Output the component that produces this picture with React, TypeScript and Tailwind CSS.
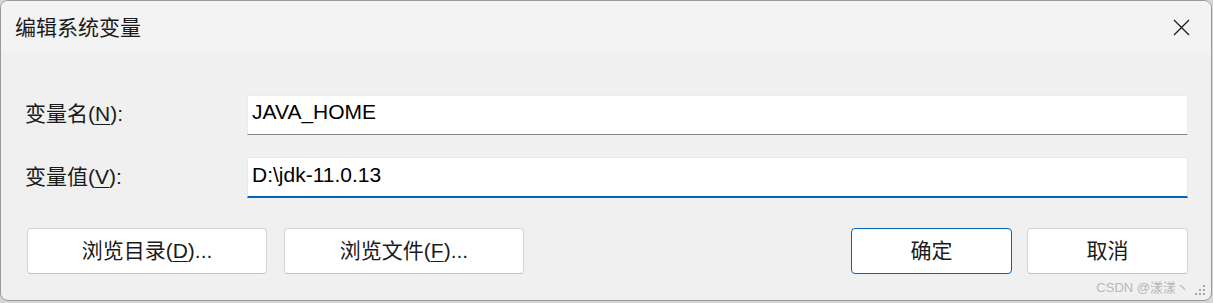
import React from "react";

const FONT = { fontFamily: '"Liberation Sans", "Noto Sans CJK SC", sans-serif' };

function Mnemonic({ label, k, tail = "" }: { label: string; k: string; tail?: string }) {
  return (
    <>
      {label}(<span className="underline underline-offset-[3px] decoration-1">{k}</span>){tail}
    </>
  );
}

function DialogButton({
  children,
  primary,
  narrow,
  className = "",
}: {
  children: React.ReactNode;
  primary?: boolean;
  narrow?: boolean;
  className?: string;
}) {
  return (
    <button
      type="button"
      className={
        "h-[46px] flex items-center justify-center rounded-[4px] bg-white text-[21px] text-[#1b1b1b] " +
        (narrow ? "w-[161px] " : "w-[240px] ") +
        (primary ? "border border-[#0067c0] " : "border border-[#d4d4d4] border-b-[#c2c2c2] ") +
        className
      }
    >
      {children}
    </button>
  );
}

export default function App() {
  return (
    <div className="w-[1213px] h-[303px] bg-[#d6d6d6]" style={FONT}>
      <div className="relative w-[1212px] h-[301px] rounded-[8px] border border-[#9a9a9a] bg-[#f0f0f0] overflow-hidden flex flex-col">
        {/* title bar */}
        <div className="h-[52px] shrink-0 bg-[#f3f3f4] flex items-center justify-between pl-[14px] pr-[21px]">
          <span className="text-[21px] text-[#1b1b1b] leading-none">编辑系统变量</span>
          <svg width="17" height="17" viewBox="0 0 17 17" className="text-[#1b1b1b]">
            <path d="M1 1 L16 16 M16 1 L1 16" stroke="currentColor" strokeWidth="1.3" fill="none" />
          </svg>
        </div>

        {/* body */}
        <div className="flex-1 pl-[24px] pr-[23px] pt-[42px]">
          <div className="flex items-center">
            <div className="w-[222px] text-[21px] text-[#1b1b1b] pb-[2px]">
              <Mnemonic label="变量名" k="N" tail=":" />
            </div>
            <div className="flex-1 h-[40px] bg-white border border-[#ececec] border-b-[#868686] pl-[4px] text-[21px] text-black leading-[32px]">
              JAVA_HOME
            </div>
          </div>

          <div className="flex items-center mt-[22px]">
            <div className="w-[222px] text-[21px] text-[#1b1b1b] pb-[2px]">
              <Mnemonic label="变量值" k="V" tail=":" />
            </div>
            <div className="flex-1 h-[41px] bg-white border border-[#e6e9ee] border-b-2 border-b-[#0067c0] pl-[4px] text-[21px] text-black leading-[34px]">
              D:\jdk-11.0.13
            </div>
          </div>

          <div className="flex items-center mt-[30px] pl-[2px]">
            <DialogButton>
              <Mnemonic label="浏览目录" k="D" tail="..." />
            </DialogButton>
            <DialogButton className="ml-[17px]">
              <Mnemonic label="浏览文件" k="F" tail="..." />
            </DialogButton>
            <div className="flex-1" />
            <DialogButton primary narrow>
              确定
            </DialogButton>
            <DialogButton narrow className="ml-[15px]">
              取消
            </DialogButton>
          </div>
        </div>

        {/* watermark */}
        <span className="absolute right-[22px] bottom-[6px] text-[13px] leading-none text-[#b8b8b8]">
          CSDN @漾漾丶
        </span>

        {/* resize grip */}
        <svg width="12" height="12" viewBox="0 0 12 12" className="absolute right-[5px] bottom-[4px]">
          {[
            [9, 1],
            [9, 5],
            [5, 5],
            [9, 9],
            [5, 9],
            [1, 9],
          ].map(([x, y]) => (
            <rect key={`${x}-${y}`} x={x} y={y} width="2" height="2" fill="#a8a8a8" />
          ))}
        </svg>
      </div>
    </div>
  );
}
